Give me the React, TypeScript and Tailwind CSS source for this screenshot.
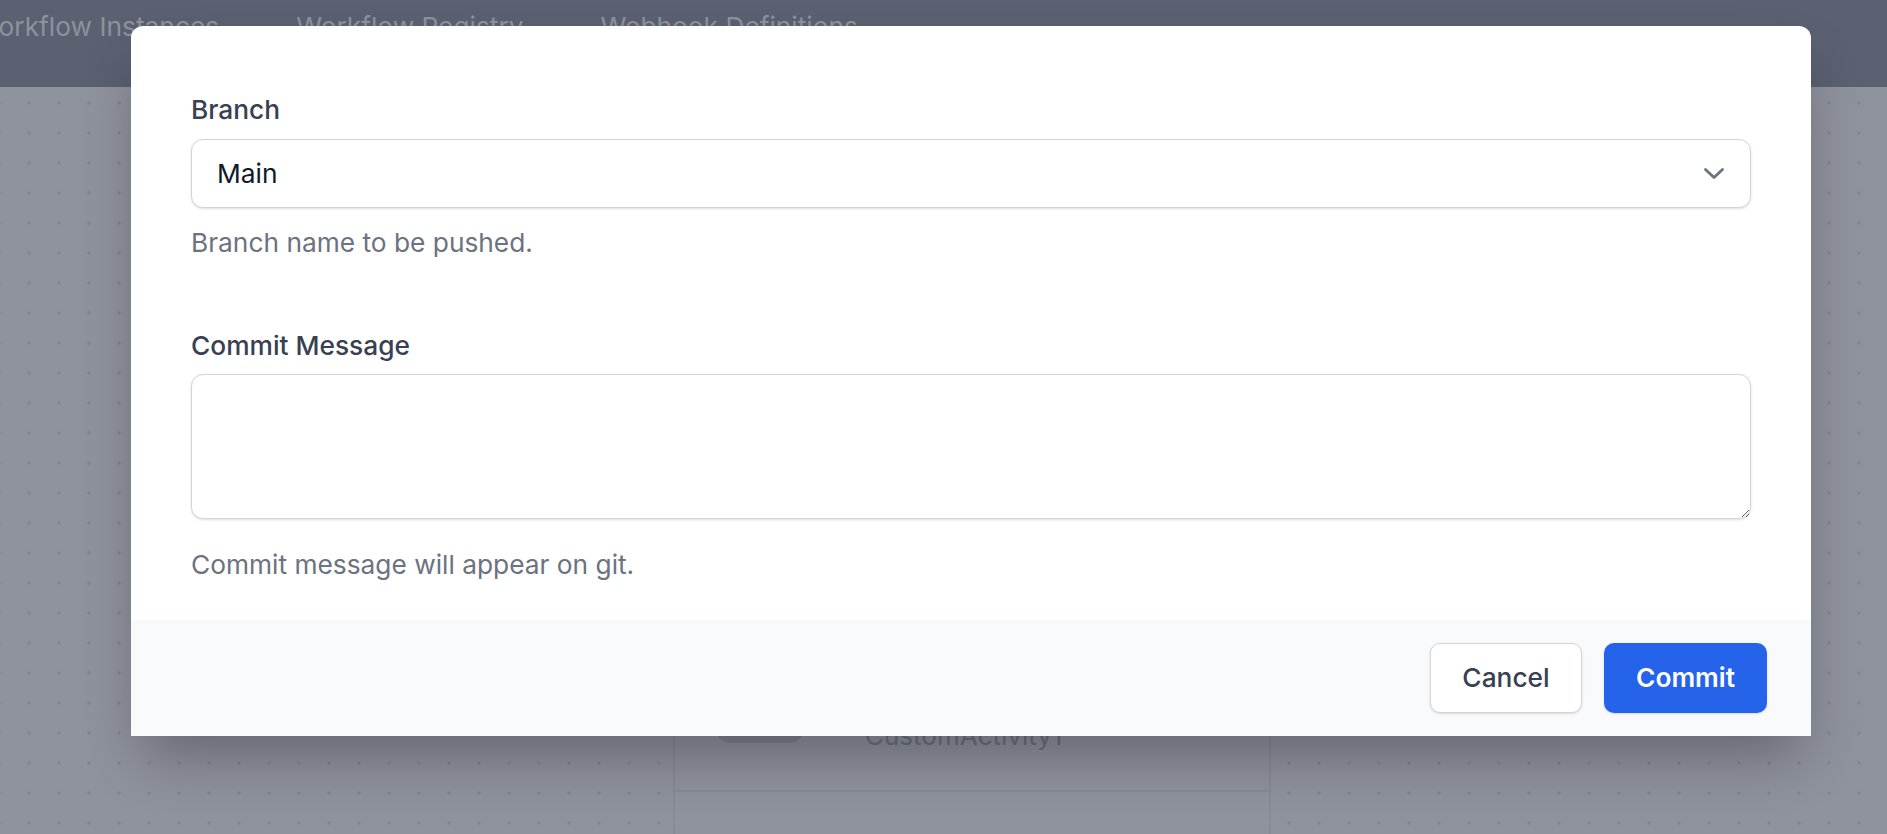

const NAV_ITEMS = ["Workflow Instances", "Workflow Registry", "Webhook Definitions"];

function Chevron() {
  return (
    <svg width="22" height="14" viewBox="0 0 22 14" fill="none" className="shrink-0">
      <polyline
        points="2.5,2.5 11,10.5 19.5,2.5"
        stroke="#6b7280"
        strokeWidth="2.8"
        strokeLinecap="round"
        strokeLinejoin="round"
      />
    </svg>
  );
}

function Backdrop() {
  return (
    <>
      {/* top nav (dimmed) */}
      <header className="h-[87px] shrink-0 bg-[#5b6171]">
        <nav className="ml-[-26px] flex gap-[77px] pt-[8px] text-[26.3px] leading-[38px] text-[#8d929e]">
          {NAV_ITEMS.map((n) => (
            <span key={n} className="whitespace-nowrap">
              {n}
            </span>
          ))}
        </nav>
      </header>

      {/* designer canvas with dot grid */}
      <div className="relative flex-1 bg-[#8f939e] bg-[radial-gradient(circle,#80848f_1.3px,transparent_1.8px)] bg-[size:30px_30px] bg-[position:14px_1px]">
        <div className="absolute left-[673px] top-[213px] h-[700px] w-[598px] border-x-2 border-[#878b97] bg-[#8f939e]">
          <div className="absolute left-[40px] top-[383px] h-[60px] w-[90px] rounded-[16px] bg-[#7f8390]" />
          <div className="absolute left-[190px] top-[418px] whitespace-nowrap text-[26px] leading-[36px] text-[#6c7180]">
            CustomActivity1
          </div>
          <div className="absolute left-0 right-0 top-[490px] border-t-2 border-[#878b97]" />
        </div>
      </div>
    </>
  );
}

export default function App() {
  return (
    <div className="relative flex h-[834px] w-full flex-col overflow-hidden font-['Inter','Noto_Sans',sans-serif]">
      <Backdrop />

      {/* modal */}
      <div className="absolute inset-0 flex items-start pl-[131px] pt-[26px]">
        <div className="w-[1680px] overflow-hidden rounded-t-[12px] bg-white shadow-[0_30px_60px_-10px_rgba(0,0,0,0.3)]">
          <div className="px-[60px] pb-[36px] pt-[65px] text-[26.3px] leading-[38px]">
            <label className="block font-medium text-[#374151]">Branch</label>
            <div className="mt-[10px] flex h-[69px] items-center rounded-[12px] border border-[#d1d5db] bg-white pl-[25px] pr-[25px] text-[#111827] shadow-sm">
              <span className="flex-1">Main</span>
              <Chevron />
            </div>
            <p className="mt-[16px] text-[#6b7280]">Branch name to be pushed.</p>

            <label className="mt-[65px] block font-medium text-[#374151]">Commit Message</label>
            <textarea className="mt-[9px] block h-[145px] w-full resize-y rounded-[12px] border border-[#d1d5db] bg-white shadow-sm outline-none" />
            <p className="mt-[27px] text-[#6b7280]">Commit message will appear on git.</p>
          </div>

          <div className="flex justify-end gap-[22px] bg-[#f9fafb] px-[44px] py-[23px] text-[26.3px]">
            <button
              type="button"
              className="h-[70px] w-[152px] rounded-[10px] border border-[#d1d5db] bg-white font-medium text-[#374151] shadow-sm"
            >
              Cancel
            </button>
            <button
              type="button"
              className="h-[70px] w-[163px] rounded-[10px] bg-[#2563eb] font-semibold text-white shadow-sm"
            >
              Commit
            </button>
          </div>
        </div>
      </div>
    </div>
  );
}
